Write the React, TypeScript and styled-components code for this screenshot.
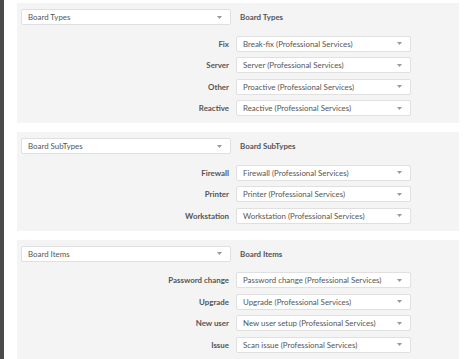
import styled, { createGlobalStyle } from 'styled-components'

const GlobalStyle = createGlobalStyle`
  body {
    margin: 0;
    background: #fff;
    font-family: Lato, 'Open Sans', sans-serif;
    color: #555;
  }
`

type Section = {
  title: string
  rows: { label: string; value: string }[]
}

const sections: Section[] = [
  {
    title: 'Board Types',
    rows: [
      { label: 'Fix', value: 'Break-fix (Professional Services)' },
      { label: 'Server', value: 'Server (Professional Services)' },
      { label: 'Other', value: 'Proactive (Professional Services)' },
      { label: 'Reactive', value: 'Reactive (Professional Services)' },
    ],
  },
  {
    title: 'Board SubTypes',
    rows: [
      { label: 'Firewall', value: 'Firewall (Professional Services)' },
      { label: 'Printer', value: 'Printer (Professional Services)' },
      { label: 'Workstation', value: 'Workstation (Professional Services)' },
    ],
  },
  {
    title: 'Board Items',
    rows: [
      { label: 'Password change', value: 'Password change (Professional Services)' },
      { label: 'Upgrade', value: 'Upgrade (Professional Services)' },
      { label: 'New user', value: 'New user setup (Professional Services)' },
      { label: 'Issue', value: 'Scan issue (Professional Services)' },
    ],
  },
]

function Caret() {
  return (
    <svg width="5" height="3" viewBox="0 0 5 3">
      <path d="M0 0 L5 0 L2.5 3 Z" fill="#999" />
    </svg>
  )
}

function SelectBox({ value }: { value: string }) {
  return (
    <Select>
      <span>{value}</span>
      <Caret />
    </Select>
  )
}

export default function App() {
  return (
    <>
      <GlobalStyle />
      <Page>
        <SideBar />
        <Content>
          {sections.map((s) => (
            <Panel key={s.title}>
              <SelectBox value={s.title} />
              <Heading>{s.title}</Heading>
              {s.rows.map((r) => (
                <Row key={r.label}>
                  <Label>{r.label}</Label>
                  <SelectBox value={r.value} />
                </Row>
              ))}
            </Panel>
          ))}
        </Content>
      </Page>
    </>
  )
}

const Page = styled.div`
  display: flex;
  width: 474px;
  height: 359px;
  overflow: hidden;
`

const SideBar = styled.div`
  width: 4px;
  flex-shrink: 0;
  background: #4b4b4b;
`

const Content = styled.div`
  display: flex;
  flex-direction: column;
  gap: 9px;
  padding: 3px 0 0 13px;
`

const Panel = styled.div`
  width: 442px;
  box-sizing: border-box;
  background: #f4f4f4;
  padding: 6px 4px 7px;
  display: grid;
  grid-template-columns: 210px 175px;
  column-gap: 5px;
  row-gap: 5.5px;
  align-items: center;
  & > :nth-child(2) {
    margin-bottom: 5px;
  }
  & > :first-child {
    margin-bottom: 5px;
  }
`

const Row = styled.div`
  display: contents;
`

const Select = styled.div`
  height: 16px;
  box-sizing: border-box;
  background: #fff;
  border: 1px solid #e0e0e0;
  border-radius: 2px;
  display: flex;
  align-items: center;
  justify-content: space-between;
  padding: 0 8px 0 6px;
  font-size: 7.9px;
  color: #555;
  white-space: nowrap;
`

const Heading = styled.div`
  font-size: 7.9px;
  font-weight: 700;
  color: #555;
  padding-left: 4px;
`

const Label = styled.div`
  font-size: 7.9px;
  font-weight: 700;
  color: #555;
  text-align: right;
  padding-right: 2px;
`
